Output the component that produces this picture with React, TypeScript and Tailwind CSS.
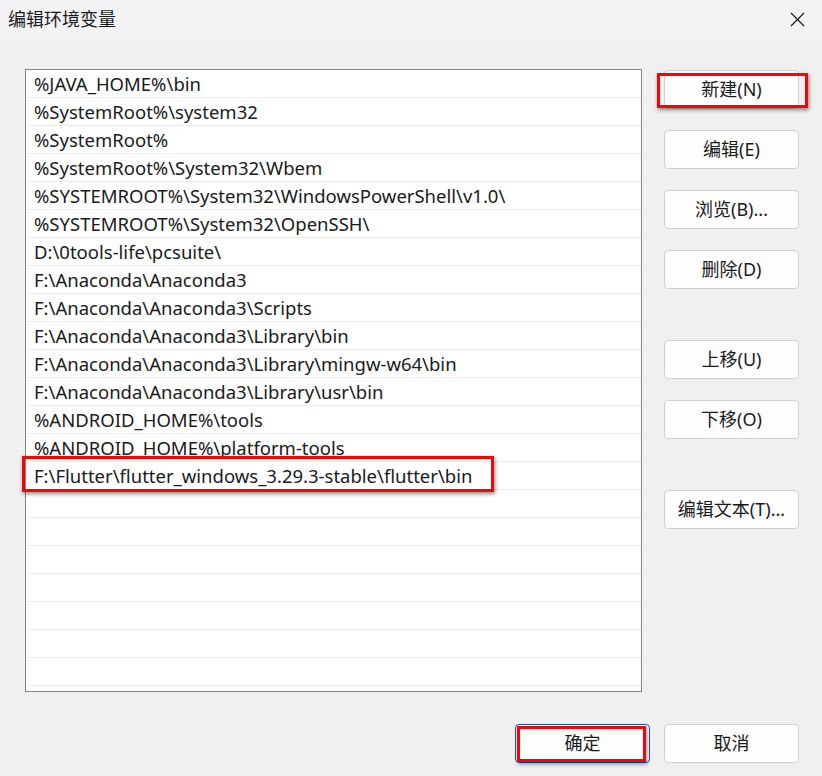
import React from "react";

const PATHS = [
  "%JAVA_HOME%\\bin",
  "%SystemRoot%\\system32",
  "%SystemRoot%",
  "%SystemRoot%\\System32\\Wbem",
  "%SYSTEMROOT%\\System32\\WindowsPowerShell\\v1.0\\",
  "%SYSTEMROOT%\\System32\\OpenSSH\\",
  "D:\\0tools-life\\pcsuite\\",
  "F:\\Anaconda\\Anaconda3",
  "F:\\Anaconda\\Anaconda3\\Scripts",
  "F:\\Anaconda\\Anaconda3\\Library\\bin",
  "F:\\Anaconda\\Anaconda3\\Library\\mingw-w64\\bin",
  "F:\\Anaconda\\Anaconda3\\Library\\usr\\bin",
  "%ANDROID_HOME%\\tools",
  "%ANDROID_HOME%\\platform-tools",
  "F:\\Flutter\\flutter_windows_3.29.3-stable\\flutter\\bin",
];

const ROW_COUNT = 22;

function WinButton({
  label,
  className = "",
  primary = false,
}: {
  label: string;
  className?: string;
  primary?: boolean;
}) {
  return (
    <button
      className={`h-[39px] w-[135px] rounded-[4px] border bg-[#fdfdfd] text-[18px] text-[#1a1a1a] ${
        primary ? "border-[#0067c0]" : "border-[#d0d0d0]"
      } ${className}`}
    >
      {label}
    </button>
  );
}

export default function App() {
  const rows = Array.from({ length: ROW_COUNT }, (_, i) => PATHS[i] ?? "");

  return (
    <div
      className="relative flex h-[776px] w-[822px] flex-col overflow-hidden bg-[#f0f0f0] text-[#1a1a1a]"
      style={{ fontFamily: '"Noto Sans", "Noto Sans CJK SC", sans-serif' }}
    >
      {/* Title bar */}
      <div className="flex h-[38px] items-center justify-between bg-[#f3f3f6] pl-[8px] pr-[17px]">
        <span className="text-[18px] leading-none">编辑环境变量</span>
        <svg width="15" height="15" viewBox="0 0 15 15" className="text-[#1a1a1a]">
          <path d="M1 1 L14 14 M14 1 L1 14" stroke="currentColor" strokeWidth="1.2" />
        </svg>
      </div>

      {/* Body */}
      <div className="flex pl-[25px] pt-[31px]">
        <div className="h-[623px] w-[617px] border border-[#838389] bg-white">
          {rows.map((p, i) => (
            <div
              key={i}
              className="ml-[1px] flex h-[28px] items-center border-b border-[#ececec] pl-[7px] pt-[2px] text-[18.5px] leading-none whitespace-nowrap"
            >
              {p}
            </div>
          ))}
        </div>

        <div className="ml-[22px] flex flex-col pt-[1px]">
          <WinButton label="新建(N)" />
          <WinButton label="编辑(E)" className="mt-[21px]" />
          <WinButton label="浏览(B)..." className="mt-[21px]" />
          <WinButton label="删除(D)" className="mt-[21px]" />
          <WinButton label="上移(U)" className="mt-[51px]" />
          <WinButton label="下移(O)" className="mt-[21px]" />
          <WinButton label="编辑文本(T)..." className="mt-[51px]" />
        </div>
      </div>

      {/* Footer */}
      <div className="flex justify-end gap-[14px] pr-[23px] pt-[32px]">
        <WinButton label="确定" primary />
        <WinButton label="取消" />
      </div>

      {/* Red highlight overlays */}
      <div className="pointer-events-none absolute left-[657px] top-[73px] h-[35px] w-[151px] border-[3px] border-[#ff0000] shadow-[1px_2px_4px_rgba(0,0,0,0.45)]" />
      <div className="pointer-events-none absolute left-[22px] top-[456px] h-[36px] w-[472px] border-[3px] border-[#ff0000] shadow-[1px_2px_4px_rgba(0,0,0,0.45)]" />
      <div className="pointer-events-none absolute left-[517px] top-[726px] h-[36px] w-[129px] border-[3px] border-[#ff0000] shadow-[1px_2px_4px_rgba(0,0,0,0.45)]" />
    </div>
  );
}
